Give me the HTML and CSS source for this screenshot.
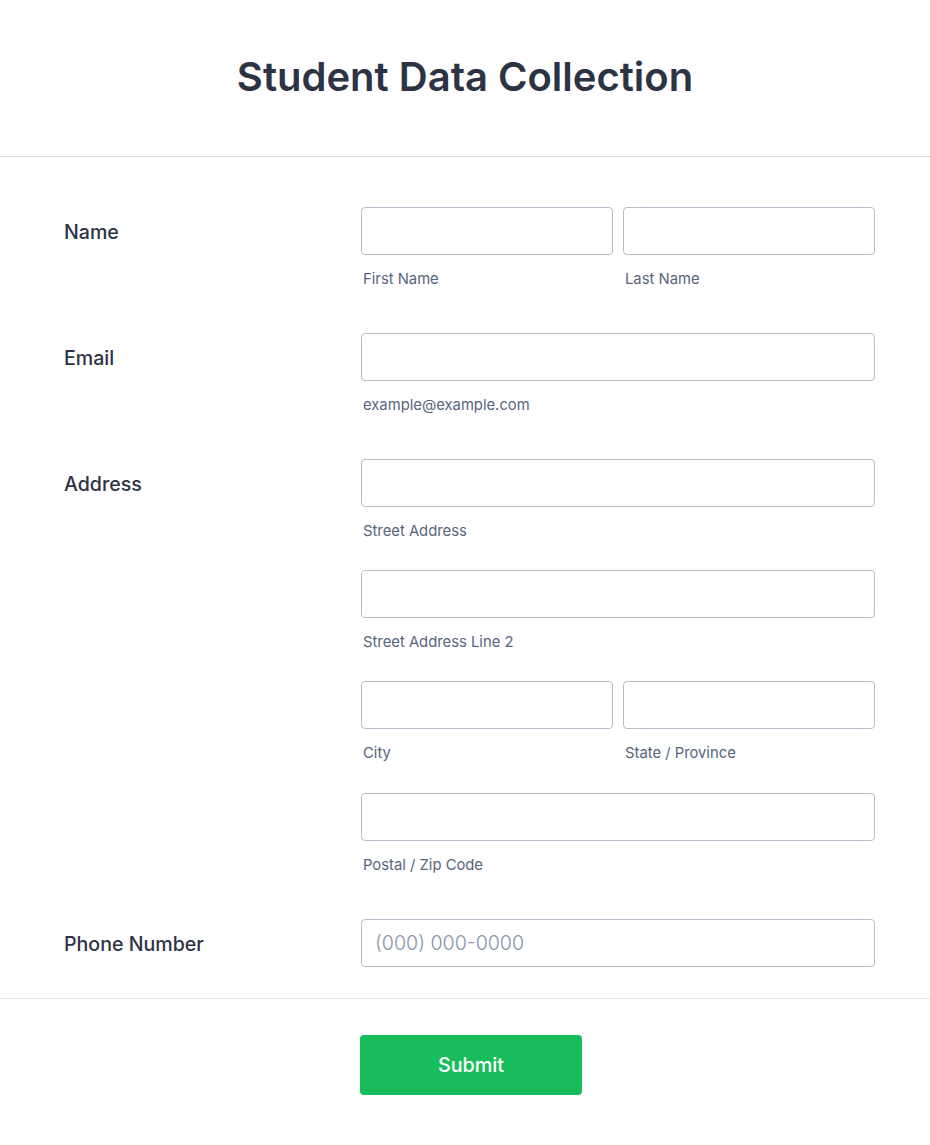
FILE: index.html
```html
<!DOCTYPE html>
<html lang="en">
<head>
<meta charset="utf-8">
<title>Student Data Collection</title>
<link rel="stylesheet" href="styles.css">
</head>
<body>
<div class="page">
  <header class="header">
    <h1 class="title">Student Data Collection</h1>
  </header>
  <form class="form">
    <div class="row">
      <div class="label">Name</div>
      <div class="fields">
        <div class="pair">
          <div class="part"><input class="input" type="text"><div class="sub">First Name</div></div>
          <div class="part"><input class="input" type="text"><div class="sub">Last Name</div></div>
        </div>
      </div>
    </div>
    <div class="row">
      <div class="label">Email</div>
      <div class="fields">
        <div class="part"><input class="input" type="text"><div class="sub">example@example.com</div></div>
      </div>
    </div>
    <div class="row">
      <div class="label">Address</div>
      <div class="fields stack">
        <div class="part"><input class="input" type="text"><div class="sub">Street Address</div></div>
        <div class="part"><input class="input" type="text"><div class="sub">Street Address Line 2</div></div>
        <div class="pair">
          <div class="part"><input class="input" type="text"><div class="sub">City</div></div>
          <div class="part"><input class="input" type="text"><div class="sub">State / Province</div></div>
        </div>
        <div class="part"><input class="input" type="text"><div class="sub">Postal / Zip Code</div></div>
      </div>
    </div>
    <div class="row last">
      <div class="label">Phone Number</div>
      <div class="fields">
        <input class="input phone" type="text" placeholder="(000) 000-0000">
      </div>
    </div>
  </form>
  <div class="actions">
    <div class="actions-inner">
      <div></div>
      <div><button class="submit" type="button">Submit</button></div>
    </div>
  </div>
</div>
</body>
</html>
```
FILE: styles.css
```css
* { box-sizing: border-box; }
html, body { margin: 0; padding: 0; background: #fff; }
body {
  font-family: Inter, "Noto Sans", sans-serif;
  color: #2c3345;
}
.page { width: 930px; min-height: 1145px; background: #fff; }
.header {
  height: 157px;
  border-bottom: 1px solid #d8dae5;
  display: flex;
  justify-content: center;
  padding-top: 51px;
}
.title {
  margin: 0;
  font-size: 40px;
  line-height: 52px;
  font-weight: 600;
  color: #2c3345;
  letter-spacing: 0;
}
.form {
  padding: 50px 55px 31px 64px;
  border-bottom: 1px solid #e6e8f0;
}
.row {
  display: grid;
  grid-template-columns: 297px 514px;
  margin-bottom: 15px;
}
.row.last { margin-bottom: 0; }
.label {
  font-size: 19.6px;
  font-weight: 500;
  line-height: 26px;
  padding-top: 12px;
  color: #2c3345;
}
.fields { display: flex; flex-direction: column; }
.pair { display: grid; grid-template-columns: 1fr 1fr; column-gap: 10px; }
.part { height: 111px; }
.stack .pair .part { height: 112px; }
.input {
  display: block;
  width: 100%;
  height: 48px;
  border: 1px solid #b8bdc9;
  border-radius: 4px;
  background: #fff;
  padding: 0 13px;
  font-family: Inter, "Noto Sans", sans-serif;
  font-size: 19.6px;
  color: #2c3345;
  outline: none;
}
.input::placeholder { color: #8894ab; font-weight: 300; }
.sub {
  margin-top: 15px;
  padding-left: 2px;
  font-size: 14.8px;
  line-height: 18px;
  color: #57647e;
}
.actions { padding: 36px 0 50px; }
.actions-inner {
  display: grid;
  grid-template-columns: 296px 514px;
  padding-left: 64px;
}
.submit {
  width: 222px;
  height: 60px;
  border: none;
  border-radius: 4px;
  background: #18bd5b;
  color: #fff;
  font-family: Inter, "Noto Sans", sans-serif;
  font-size: 19.8px;
  font-weight: 500;
  cursor: pointer;
}
```
